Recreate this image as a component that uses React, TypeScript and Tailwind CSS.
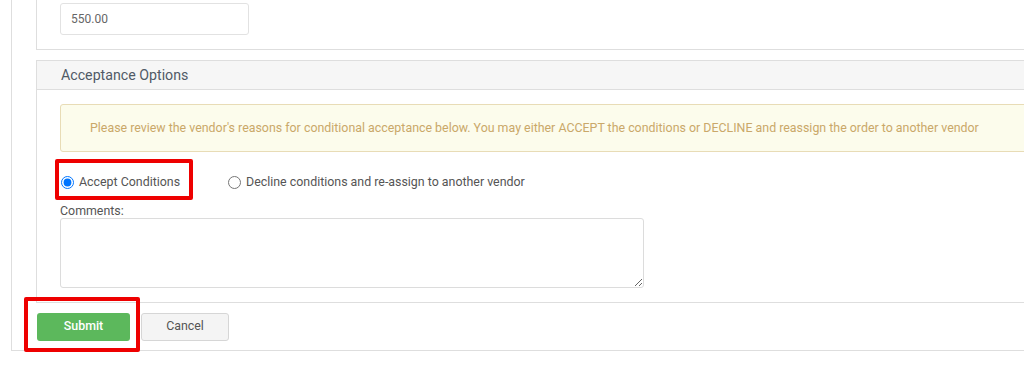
import { useState } from "react";

// Red annotation frame laid over a control
const Highlight = ({ className }: { className: string }) => (
  <div
    aria-hidden="true"
    className={`pointer-events-none absolute rounded-[2px] border-[4px] border-[#ee0000] ${className}`}
  />
);

export default function App() {
  const [choice, setChoice] = useState<"accept" | "decline">("accept");

  return (
    <div className="relative h-[372px] w-[1024px] overflow-hidden bg-white font-['Roboto',sans-serif] text-[12.4px] text-[#555]">
      <div className="-mt-[28px] ml-[11px] w-[1060px] border-b border-l border-[#dedede] pb-[9px] pl-[24px]">
        {/* previous section, mostly scrolled away */}
        <section className="border border-t-0 border-[#dedede] px-[23px] pb-[14px] pt-[12px]">
          <label className="mb-[5px] block leading-[14px]">Proposed Fee by Vendor:</label>
          <input
            readOnly
            value="550.00"
            className="h-[32px] w-[189px] rounded-[3px] border border-[#e2e2e2] px-[10px] text-[12px] text-[#666] outline-none"
          />
        </section>

        <section className="mt-[10px] border border-[#dedede]">
          <header className="flex h-[29px] items-center border-b border-[#dedede] bg-[#f6f6f6] px-[24px] pt-[1px] text-[14.2px] text-[#505a66]">
            Acceptance Options
          </header>
          <div className="px-[23px] pb-[14px] pt-[14px]">
            <div className="flex h-[48px] items-center rounded-[3px] border border-[#e8dcb6] bg-[#fcfcec] px-[29px] text-[#caa869]">
              Please review the vendor's reasons for conditional acceptance below. You may either ACCEPT the conditions or
              DECLINE and reassign the order to another vendor
            </div>

            <div className="mt-[21px] flex items-center gap-[48px] pl-[1px]">
              <label className="flex items-center gap-[5px]">
                <input
                  type="radio"
                  name="choice"
                  checked={choice === "accept"}
                  onChange={() => setChoice("accept")}
                  className="m-0 h-[13px] w-[13px]"
                />
                Accept Conditions
              </label>
              <label className="flex items-center gap-[5px]">
                <input
                  type="radio"
                  name="choice"
                  checked={choice === "decline"}
                  onChange={() => setChoice("decline")}
                  className="m-0 h-[13px] w-[13px]"
                />
                Decline conditions and re-assign to another vendor
              </label>
            </div>

            <label className="mt-[12px] block leading-[14px]">Comments:</label>
            <textarea className="block h-[70px] w-[584px] rounded-[3px] border border-[#dcdcdc] outline-none" />
          </div>
        </section>

        <div className="mt-[10px] flex gap-[11px] pl-[1px]">
          <button className="h-[28px] w-[93px] rounded-[3px] bg-[#5cb85c] text-[12.4px] font-medium text-white">
            Submit
          </button>
          <button className="h-[28px] w-[88px] rounded-[3px] border border-[#d6d6d6] bg-[#f4f4f4] text-[12.4px] text-[#555]">
            Cancel
          </button>
        </div>
      </div>

      <Highlight className="left-[55px] top-[159px] h-[41px] w-[138px]" />
      <Highlight className="left-[24px] top-[297px] h-[55px] w-[116px]" />
    </div>
  );
}
